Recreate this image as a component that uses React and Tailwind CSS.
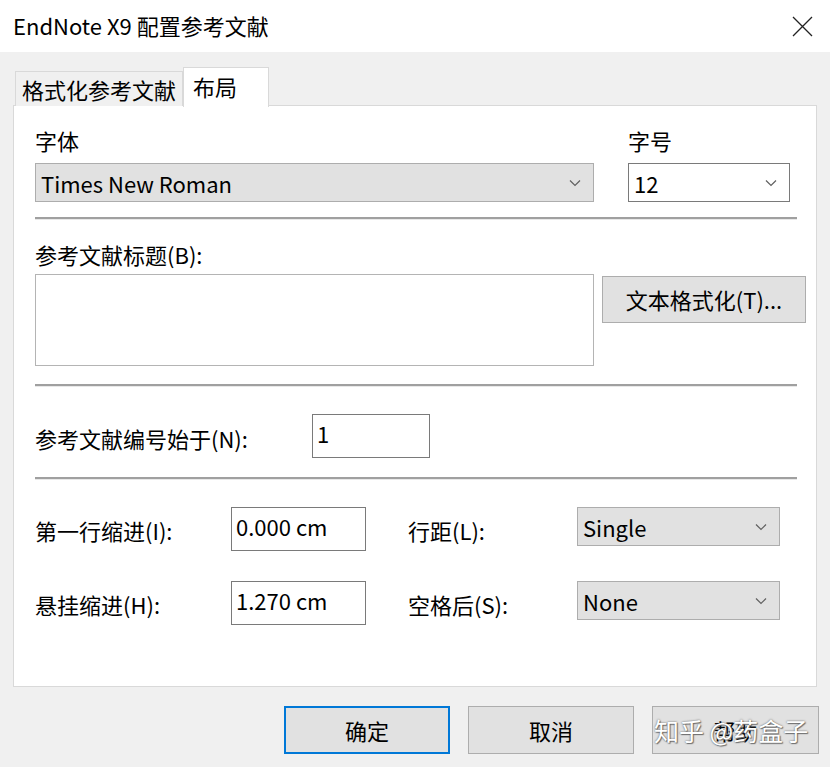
import React from "react";

// small "v" used by the combo boxes
const Chevron = () => (
  <svg width="12" height="8" viewBox="0 0 12 8" className="shrink-0">
    <path d="M1 1.5 L6 6.5 L11 1.5" fill="none" stroke="#606060" strokeWidth="1.2" />
  </svg>
);

const Combo = ({ value, width, light }) => (
  <div
    className={`${width} h-[39px] flex items-center justify-between pl-[5px] pr-[12px] border ${
      light ? "bg-white border-[#7a7a7a]" : "bg-[#e1e1e1] border-[#adadad]"
    }`}
  >
    <span className="text-[22px] leading-none">{value}</span>
    <Chevron />
  </div>
);

const Field = ({ value, width }) => (
  <div className={`${width} h-[44px] bg-white border border-[#7a7a7a] pl-[4px] pt-[4px] text-[22px] leading-[28px]`}>
    {value}
  </div>
);

const Divider = () => <div className="w-[762px] h-[3px] border-t-2 border-[#a0a0a0] border-b border-b-[#e8e8e8]" />;

const Button = ({ children, primary, width }) => (
  <div
    className={`${width} h-[48px] flex items-center justify-center bg-[#e1e1e1] text-[22px] ${
      primary ? "border-2 border-[#0078d7]" : "border border-[#adadad]"
    }`}
  >
    {children}
  </div>
);

export default function App() {
  return (
    <div className="w-[830px] h-[767px] bg-[#f0f0f0] flex flex-col text-black font-['Noto_Sans_CJK_SC',sans-serif] overflow-hidden">
      {/* title bar */}
      <div className="h-[52px] bg-white flex items-center justify-between pl-[13px] pr-[17px]">
        <span className="text-[22px] leading-none -mt-[2px]">EndNote X9 配置参考文献</span>
        <svg width="21" height="21" viewBox="0 0 21 21">
          <path d="M1 1 L20 20 M20 1 L1 20" stroke="#222" strokeWidth="1.3" />
        </svg>
      </div>

      {/* tabs */}
      <div className="flex items-end pl-[15px] pt-[15px] relative z-10">
        <div className="w-[168px] h-[35px] border border-b-0 border-[#d9d9d9] bg-[#f0f0f0] pl-[6px] text-[22px] leading-[34px]">
          格式化参考文献
        </div>
        <div className="w-[86px] h-[40px] -mb-px bg-white border border-b-0 border-[#d9d9d9] pl-[9px] text-[22px] leading-[36px]">
          布局
        </div>
      </div>

      {/* layout panel */}
      <div className="ml-[13px] w-[804px] h-[582px] -mt-px bg-white border border-[#d9d9d9] pl-[21px] pt-[19px] flex flex-col">
        <div className="flex">
          <div className="w-[559px] flex flex-col gap-[8px]">
            <span className="text-[22px] leading-[30px]">字体</span>
            <Combo value="Times New Roman" width="w-[559px]" />
          </div>
          <div className="ml-[34px] w-[162px] flex flex-col gap-[8px]">
            <span className="text-[22px] leading-[30px]">字号</span>
            <Combo value="12" width="w-[162px]" light />
          </div>
        </div>

        <div className="mt-[15px]">
          <Divider />
        </div>

        <span className="mt-[19px] text-[22px] leading-[30px]">参考文献标题(B):</span>
        <div className="mt-[5px] flex items-start">
          <div className="w-[559px] h-[92px] border border-[#b4b4b4] bg-white" />
          <div className="ml-[8px] mt-[2px] w-[204px] h-[47px] bg-[#e1e1e1] border border-[#adadad] flex items-center justify-center text-[22px]">
            文本格式化(T)...
          </div>
        </div>

        <div className="mt-[18px]">
          <Divider />
        </div>

        <div className="mt-[27px] flex items-center">
          <span className="w-[277px] text-[22px] leading-[30px] mt-[3px]">参考文献编号始于(N):</span>
          <Field value="1" width="w-[118px]" />
        </div>

        <div className="mt-[19px]">
          <Divider />
        </div>

        <div className="mt-[27px] flex items-start">
          <span className="w-[196px] text-[22px] leading-[30px] mt-[8px]">第一行缩进(I):</span>
          <Field value="0.000 cm" width="w-[135px]" />
          <span className="ml-[42px] w-[169px] text-[22px] leading-[30px] mt-[8px]">行距(L):</span>
          <Combo value="Single" width="w-[203px]" />
        </div>

        <div className="mt-[30px] flex items-start">
          <span className="w-[196px] text-[22px] leading-[30px] mt-[8px]">悬挂缩进(H):</span>
          <Field value="1.270 cm" width="w-[135px]" />
          <span className="ml-[42px] w-[169px] text-[22px] leading-[30px] mt-[8px]">空格后(S):</span>
          <Combo value="None" width="w-[203px]" />
        </div>
      </div>

      {/* dialog buttons */}
      <div className="mt-[19px] pl-[284px] flex gap-[18px]">
        <Button width="w-[166px]" primary>确定</Button>
        <Button width="w-[166px]">取消</Button>
        <div className="relative">
          <Button width="w-[167px]">帮助</Button>
          <span className="absolute left-[2px] top-[9px] text-[25px] leading-[30px] whitespace-nowrap text-white [text-shadow:0_0_2px_#555,1px_1px_1px_#777]">
            知乎 @药盒子
          </span>
        </div>
      </div>
    </div>
  );
}
